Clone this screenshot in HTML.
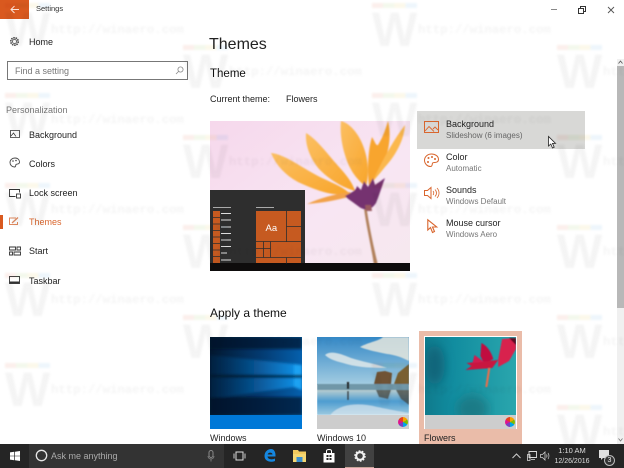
<!DOCTYPE html>
<html><head><meta charset="utf-8"><style>
html,body{margin:0;padding:0}
body{width:624px;height:468px;position:relative;overflow:hidden;background:#fff;font-family:"Liberation Sans",sans-serif;color:#222}
.t{position:absolute;white-space:nowrap;font-size:9px;line-height:12px;color:#222}
.s{color:#767676;font-size:8px}
#wms{position:absolute;left:0;top:0;width:624px;height:468px;overflow:hidden;mix-blend-mode:multiply;pointer-events:none}
.wm{position:absolute;width:180px;height:50px;filter:blur(1px);opacity:.3}
.wm i{position:absolute;left:0;top:0;width:45px;height:5px;background:linear-gradient(90deg,#f3c8be 0 25%,#d8e8c0 25% 50%,#f5e8b8 50% 75%,#c4e0f5 75%)}
.wm b{position:absolute;left:0;top:0;font:bold 48px "Liberation Sans",sans-serif;color:#dcdcdc}
.wm span{position:absolute;left:46px;top:20px;font:bold 12.3px "Liberation Mono",monospace;color:#dcdcdc}
svg{position:absolute;overflow:visible}
.th{position:absolute;width:92px;height:78px;top:337px;overflow:hidden}
</style></head><body>

<!-- title bar -->
<div style="position:absolute;left:0;top:0;width:29px;height:19px;background:#d9591f"></div>
<svg style="left:10px;top:5px" width="10" height="9" viewBox="0 0 10 9"><path d="M4.500 1 1 4.500 4.500 8M1 4.500h8" fill="none" stroke="#fbe3d8" stroke-width="1"/></svg>
<div class="t" style="left:36px;top:3px;font-size:7.500px;color:#333">Settings</div>
<div style="position:absolute;left:551px;top:9px;width:6px;height:1px;background:#888"></div>
<svg style="left:578px;top:6px" width="8" height="8" viewBox="0 0 8 8"><path d="M.5 2.500h5v5h-5zM2.500 2.500V.5h5v5h-2" fill="none" stroke="#333"/></svg>
<svg style="left:607px;top:6px" width="8" height="8" viewBox="0 0 8 8"><path d="M1 1l6 6M7 1 1 7" stroke="#555" stroke-width=".9"/></svg>

<!-- sidebar -->
<svg style="left:9px;top:36px" width="11" height="11" viewBox="0 0 11 11"><circle cx="5.500" cy="5.500" r="3.700" fill="none" stroke="#444" stroke-width="1.600" stroke-dasharray="1.500 .8"/><circle cx="5.500" cy="5.500" r="2" fill="none" stroke="#444" stroke-width=".8"/></svg>
<div class="t" style="left:29px;top:36px;color:#222">Home</div>
<div style="position:absolute;left:7px;top:61px;width:179px;height:17px;border:1px solid #777;background:#fff"></div>
<div class="t" style="left:15px;top:65px;color:#777">Find a setting</div>
<svg style="left:175px;top:66px" width="9" height="9" viewBox="0 0 9 9"><circle cx="5.500" cy="3.500" r="2.600" fill="none" stroke="#888" stroke-width=".8"/><path d="M3.500 5.500 1 8" stroke="#888" stroke-width=".8"/></svg>
<div class="t" style="left:6px;top:104px;color:#777">Personalization</div>

<svg style="left:10px;top:130px" width="10" height="8" viewBox="0 0 10 8"><path d="M.5.500h9v7h-9z" fill="none" stroke="#333" stroke-width=".8"/><path d="M1 6l2.500-3L6 6.500" fill="none" stroke="#333" stroke-width=".7"/></svg>
<div class="t" style="left:29px;top:129px">Background</div>
<svg style="left:9px;top:157px" width="12" height="12" viewBox="0 0 12 12"><path d="M6 1C3 1 1 3 1 5.500S3 10 5.500 10c1.500 0 1-1.500 1.500-2.500s3.500.5 3.500-2.500C10.500 2.500 8.500 1 6 1z" fill="none" stroke="#444" stroke-width=".9"/><circle cx="4" cy="4" r=".8" fill="#444"/><circle cx="7" cy="3.500" r=".8" fill="#444"/></svg>
<div class="t" style="left:29px;top:158px">Colors</div>
<svg style="left:9px;top:189px" width="12" height="10" viewBox="0 0 12 10"><path d="M6.500 7.500H.5v-7h10v3" fill="none" stroke="#333" stroke-width=".9"/><rect x="7.500" y="5" width="4" height="4" fill="none" stroke="#333" stroke-width=".9"/></svg>
<div class="t" style="left:29px;top:187px">Lock screen</div>
<div style="position:absolute;left:0;top:215px;width:3px;height:14px;background:#d9591f"></div>
<svg style="left:9px;top:216px" width="11" height="11" viewBox="0 0 11 11"><path d="M7 2H.5v6.500h8V6" fill="none" stroke="#e08a60" stroke-width="1"/><path d="M3 7l6-5.500" stroke="#e08a60" stroke-width="1.300"/></svg>
<div class="t" style="left:29px;top:216px;color:#d9662e">Themes</div>
<svg style="left:9px;top:246px" width="12" height="10" viewBox="0 0 12 10"><path d="M.5 1h6v3h-6zM8 1h3.500v3H8zM.5 6h3v3h-3zM5 6h6.500v3H5z" fill="none" stroke="#333" stroke-width=".9"/></svg>
<div class="t" style="left:29px;top:245px">Start</div>
<svg style="left:9px;top:276px" width="11" height="8" viewBox="0 0 11 8"><rect x=".5" y=".5" width="10" height="7" fill="none" stroke="#333" stroke-width=".9"/><rect x=".5" y="5.500" width="10" height="2" fill="#333"/></svg>
<div class="t" style="left:29px;top:275px">Taskbar</div>

<!-- main -->
<div class="t" style="left:209px;top:35px;font-size:16px;line-height:20px;color:#222">Themes</div>
<div class="t" style="left:210px;top:67px;font-size:11.500px;line-height:14px;color:#111">Theme</div>
<div class="t" style="left:210px;top:93px;color:#222">Current theme:</div>
<div class="t" style="left:286px;top:93px;color:#222">Flowers</div>

<!-- preview -->
<svg style="left:210px;top:121px;overflow:hidden" width="200" height="150" viewBox="210 121 200 150">
<defs>
<linearGradient id="bg" x1="0" y1="0" x2="1" y2="1"><stop offset="0" stop-color="#f6d8ec"/><stop offset=".6" stop-color="#f8e6f3"/><stop offset="1" stop-color="#f6e8ee"/></linearGradient>
<linearGradient id="pt" x1="0" y1="0" x2="1" y2="1"><stop offset="0" stop-color="#fbbf62"/><stop offset="1" stop-color="#f8a52a"/></linearGradient>
<filter id="b1"><feGaussianBlur stdDeviation=".7"/></filter>
</defs>
<rect x="210" y="121" width="200" height="150" fill="url(#bg)"/>
<g filter="url(#b1)">
<path d="M366 205C369 225 373 245 378 265L374 265C371 245 366 225 364 208Z" fill="#b0805a"/>
<path d="M271 153C285 154 305 170 322 178C335 184 345 188 350 194C335 196 322 193 298 182C285 175 276 165 271 153Z" fill="url(#pt)"/>
<path d="M306 133C318 140 328 155 340 168C348 177 353 184 355 191C345 188 332 182 320 170C311 160 305 146 306 133Z" fill="url(#pt)"/>
<path d="M341 121C352 124 362 138 366 155C369 168 368 178 366 187C358 180 350 172 345 155C341 142 340 130 341 121Z" fill="url(#pt)"/>
<path d="M372 137C375 142 376 146 378 145C383 137 386 128 388 121C391 133 390 148 384 162C380 172 375 180 369 186C367 170 368 150 372 137Z" fill="#f8a52e"/>
<path d="M405 125C404 140 396 155 385 167C381 172 377 177 373 181C380 165 392 142 405 125Z" fill="#fbb84e"/>
<path d="M307 204C320 198 335 194 350 192L352 196C338 200 322 203 307 204Z" fill="#f2a24a"/>
<path d="M345 196C352 192 356 191 357 186L361 190 364 181 368 187 373 178 375 185 385 178C382 186 379 196 376 203 371 211 364 211 358 206 353 202 349 200 345 196Z" fill="#74306f"/>
<path d="M365 205l6 0 1 6h-6z" fill="#9a5a60"/>
</g>
<rect x="210" y="190" width="95" height="73" fill="#2e2e2e"/>
<rect x="210" y="263" width="200" height="8" fill="#0e0c0c"/>
<rect x="213" y="207" width="18" height="1" fill="#aaa"/><rect x="256" y="207" width="18" height="1" fill="#aaa"/>
<rect x="213" y="211" width="7" height="52" fill="#c65a20"/>
<path d="M213 217.500h7M213 224h7M213 230.500h7M213 237h7M213 243.500h7M213 250h7M213 256.500h7" stroke="#2e2e2e" stroke-width=".8"/>
<path d="M221 213.500h10M221 220h10M221 227h10M221 233.500h10M221 240h10M221 246.500h10M221 253h6M221 260h10" stroke="#ddd" stroke-width="1"/>
<rect x="256" y="211" width="45" height="52" fill="#c65a20"/>
<path d="M286.500 211v31M286.500 226.500h14.500M256 241.500h45M256 257.500h45M263.500 241.500v16M270.500 241.500v16M256 248.500h14.500M286.500 257.500v6" stroke="#2e2e2e" stroke-width=".8" fill="none"/>
<text x="265.500" y="231" font-family="Liberation Sans" font-size="9.500" fill="#fff">Aa</text>
</svg>

<!-- right list -->
<div style="position:absolute;left:417px;top:111px;width:168px;height:38px;background:#d8d8d6"></div>
<svg style="left:424px;top:121px" width="15" height="12" viewBox="0 0 15 12"><path d="M.5.500h14v11H.5z" fill="none" stroke="#d9662e"/><path d="M1 10l4-4.500 5 5M9 8l2-2 3 3" fill="none" stroke="#d9662e" stroke-width=".9"/></svg>
<div class="t" style="left:446px;top:118px">Background</div>
<div class="t s" style="left:446px;top:130px;color:#666">Slideshow (6 images)</div>
<svg style="left:424px;top:153px" width="15" height="15" viewBox="0 0 15 15"><path d="M7.500 1C3.500 1 .5 3.800.5 7.300s3 6.200 6 6.200c2 0 1.500-2 2-3.300S14.500 10.500 14.500 6.500C14.500 3 11 1 7.500 1z" fill="none" stroke="#d9662e"/><circle cx="4.500" cy="5" r="1" fill="#d9662e"/><circle cx="8" cy="4" r="1" fill="#d9662e"/><circle cx="11" cy="6" r="1" fill="#d9662e"/><circle cx="4" cy="9" r="1" fill="#d9662e"/></svg>
<div class="t" style="left:446px;top:151px">Color</div>
<div class="t s" style="left:446px;top:163px;color:#777">Automatic</div>
<svg style="left:424px;top:186px" width="15" height="14" viewBox="0 0 15 14"><path d="M.5 4.500h3L7 1.500v11l-3.500-3h-3z" fill="none" stroke="#d9662e"/><path d="M9 5c1 1 1 3 0 4M11 3.500c2 2 2 5 0 7M13 2c2.700 3 2.700 7 0 10" fill="none" stroke="#d9662e" stroke-width=".8"/></svg>
<div class="t" style="left:446px;top:184px">Sounds</div>
<div class="t s" style="left:446px;top:196px;color:#777">Windows Default</div>
<svg style="left:427px;top:219px" width="11" height="15" viewBox="0 0 11 15"><path d="M.8.800V11l2.700-2.400L5.500 13.500l2-1-2-4.500h4.200z" fill="none" stroke="#d9662e" stroke-width="1.100"/></svg>
<div class="t" style="left:446px;top:217px">Mouse cursor</div>
<div class="t s" style="left:446px;top:229px;color:#777">Windows Aero</div>
<svg style="left:548px;top:136px" width="9" height="13" viewBox="0 0 9 13"><path d="M.5.500v9.500l2.300-2 1.700 4 1.700-.8-1.700-3.800h3z" fill="#fff" stroke="#222" stroke-width=".8"/></svg>

<!-- scrollbar -->
<div style="position:absolute;left:617px;top:59px;width:7px;height:385px;background:#f0f0f0"></div>
<div style="position:absolute;left:617px;top:66px;width:7px;height:242px;background:#b8b8b8"></div>
<svg style="left:618px;top:60px" width="5" height="4" viewBox="0 0 5 4"><path d="M.5 3.500 2.500 1l2 2.500" fill="none" stroke="#555" stroke-width=".8"/></svg>
<svg style="left:618px;top:438px" width="5" height="4" viewBox="0 0 5 4"><path d="M.5.500 2.500 3l2-2.500" fill="none" stroke="#777" stroke-width=".8"/></svg>

<div class="t" style="left:210px;top:306px;font-size:12px;line-height:14px;color:#111">Apply a theme</div>

<!-- thumbnails -->
<svg class="th" style="left:210px" viewBox="0 0 92 78" preserveAspectRatio="none">
<defs>
<linearGradient id="w1" x1="0" y1="0" x2="1" y2="0"><stop offset="0" stop-color="#021830"/><stop offset=".55" stop-color="#033a70"/><stop offset="1" stop-color="#0560ad"/></linearGradient>
<linearGradient id="w2" x1="0" y1="0" x2="1" y2="0"><stop offset="0" stop-color="#04305e" stop-opacity=".3"/><stop offset="1" stop-color="#0f8be0"/></linearGradient>
<filter id="b2"><feGaussianBlur stdDeviation="1.300"/></filter>
<filter id="b3"><feGaussianBlur stdDeviation=".5"/></filter>
</defs>
<rect width="92" height="78" fill="url(#w1)"/>
<g filter="url(#b2)">
<path d="M0 18 84 27V38L0 37ZM0 41H84V50L0 62Z" fill="url(#w2)"/>
<path d="M84 27 92 28V39H84ZM84 41H92V53L84 50Z" fill="#1ea2f2"/>
<rect y="38" width="92" height="2.500" fill="#011a33"/>
<rect y="0" width="92" height="12" fill="#021428" opacity=".7"/>
<rect y="60" width="92" height="18" fill="#021428" opacity=".7"/>
</g>
</svg>
<div style="position:absolute;left:210px;top:415px;width:92px;height:14px;background:#0078d7"></div>
<div class="t" style="left:210px;top:432px">Windows</div>

<svg class="th" style="left:317px" viewBox="0 0 92 78" preserveAspectRatio="none">
<defs><linearGradient id="sk" x1="0" y1="0" x2="0" y2="1"><stop offset="0" stop-color="#3488c6"/><stop offset="1" stop-color="#a4cde2"/></linearGradient><linearGradient id="wt" x1="0" y1="0" x2="0" y2="1"><stop offset="0" stop-color="#b8cdd0"/><stop offset=".45" stop-color="#4d9cd0"/><stop offset="1" stop-color="#9cc9e0"/></linearGradient></defs>
<rect width="92" height="48" fill="url(#sk)"/>
<g filter="url(#b3)">
<path d="M43 10C52 5 62 4 66 0H92V24C84 20 78 18 70 17 60 15 50 13 43 10Z" fill="#e6e8de" opacity=".85"/>
<path d="M8 18C14 13 24 17 34 21 46 25 60 27 70 31 52 31 38 30 26 26 18 24 12 22 8 18Z" fill="#dfe9ea" opacity=".85"/>
<rect y="47" width="92" height="6" fill="#6f97a8"/>
<rect y="53" width="92" height="25" fill="url(#wt)"/>
<path d="M57 47 60 35 68 34 75 36 74 47Z" fill="#6f5236"/>
<path d="M77 47 81 36 92 27V47Z" fill="#7a6030"/>
<path d="M59 53H74L71 62 62 60ZM79 53H92V68L84 62Z" fill="#4a4a42" opacity=".75"/>
<path d="M31 45V52" stroke="#222" stroke-width="2.200"/><path d="M31 54V63" stroke="#333" stroke-width="1.500"/>
<path d="M14 77C24 66 44 66 60 70 70 72 80 74 92 76V78H14Z" fill="#d8e6ee" opacity=".7"/>
</g>
</svg>
<div style="position:absolute;left:317px;top:415px;width:92px;height:14px;background:#cdcdcd"></div>
<div style="position:absolute;left:398px;top:417px;width:10px;height:10px;border-radius:50%;background:conic-gradient(#f6a200 0 17%,#7fba00 17% 33%,#00a4e8 33% 50%,#7a3fc0 50% 67%,#e0148c 67% 83%,#e8401c 83%)"></div>
<div class="t" style="left:317px;top:432px">Windows 10</div>

<div style="position:absolute;left:419px;top:331px;width:103px;height:113px;background:#eabca9"></div>
<div style="position:absolute;left:424px;top:336px;width:91px;height:91px;border:1px solid #fff"></div>
<svg class="th" style="left:425px;width:91px" viewBox="0 0 92 78" preserveAspectRatio="none">
<defs>
<linearGradient id="fl" x1="0" y1="0" x2="1" y2="0"><stop offset="0" stop-color="#0f7a8c"/><stop offset=".3" stop-color="#118c9f"/><stop offset="1" stop-color="#2aa6ad"/></linearGradient>
<filter id="b4"><feGaussianBlur stdDeviation="5"/></filter>
</defs>
<rect width="92" height="78" fill="url(#fl)"/>
<g filter="url(#b4)"><ellipse cx="10" cy="28" rx="10" ry="20" fill="#0b5a70" opacity=".7"/><ellipse cx="48" cy="72" rx="16" ry="14" fill="#17707a" opacity=".7"/></g>
<g filter="url(#b3)">
<path d="M57 6C63 9 67 15 69 22L60 27 56 19Z" fill="#c01040"/>
<path d="M74 22 78 2 92 1V12L85 24 74 30Z" fill="#d8244e"/>
<path d="M42 26 74 23 68 31 41 33 47 29Z" fill="#c8123f"/>
<path d="M50 18 60 25 48 26Z" fill="#d01a50"/>
<path d="M85 1H92V8Z" fill="#5c0d20"/>
<path d="M65 31 62 50" stroke="#e0704f" stroke-width="2.200"/>
</g>
</svg>
<div style="position:absolute;left:425px;top:415px;width:91px;height:14px;background:#cdcdcd"></div>
<div style="position:absolute;left:505px;top:417px;width:10px;height:10px;border-radius:50%;background:conic-gradient(#f6a200 0 17%,#7fba00 17% 33%,#00a4e8 33% 50%,#7a3fc0 50% 67%,#e0148c 67% 83%,#e8401c 83%)"></div>
<div class="t" style="left:424px;top:432px">Flowers</div>

<!-- taskbar -->
<div style="position:absolute;left:0;top:444px;width:624px;height:24px;background:#252525"></div>
<div style="position:absolute;left:29px;top:444px;width:195px;height:24px;background:#333"></div>
<div style="position:absolute;left:345px;top:444px;width:29px;height:24px;background:#414141"></div>
<div style="position:absolute;left:345px;top:467px;width:29px;height:1px;background:#c9a59a"></div>
<svg style="left:10px;top:451px" width="10" height="10" viewBox="0 0 10 10"><path d="M0 1.400 4.300.8v3.900H0zM5 .7 10 0v4.700H5zM0 5.300h4.300v3.900L0 8.600zM5 5.300h5V10L5 9.300z" fill="#fff"/></svg>
<svg style="left:35px;top:449px" width="13" height="13" viewBox="0 0 13 13"><circle cx="6.500" cy="6.500" r="5.200" fill="none" stroke="#e6e6e6" stroke-width="1.300"/></svg>
<div class="t" style="left:51px;top:450px;color:#aaa">Ask me anything</div>
<svg style="left:207px;top:450px" width="8" height="12" viewBox="0 0 8 12"><rect x="2" y=".5" width="4" height="7" rx="2" fill="none" stroke="#888"/><path d="M1 6c0 4 6 4 6 0M4 9v2.500" fill="none" stroke="#888" stroke-width=".8"/></svg>
<svg style="left:233px;top:451px" width="13" height="10" viewBox="0 0 13 10"><path d="M3 1h7v8H3z" fill="none" stroke="#ddd"/><path d="M1 2.500v5M12 2.500v5" stroke="#ddd" stroke-width=".9"/></svg>
<svg style="left:264px;top:449px" width="12" height="13" viewBox="0 0 12 13"><path d="M11.500 7.500H3.500C3.800 10.500 8 11 11 9.500V12C6 14 .5 12 .5 7 .5 2.500 4 0 7 0c3 0 4.800 3 4.500 7.500zM8.500 5.500C8.500 3 4 3 3.700 5.500z" fill="#1587e0" fill-rule="evenodd"/></svg>
<svg style="left:293px;top:450px" width="13" height="12" viewBox="0 0 13 12"><path d="M0 0h5l1 1.500h7V12H0z" fill="#f2ca5e"/><path d="M0 4h13v8H0z" fill="#f5d873"/><rect x="3.500" y="7" width="6" height="5" fill="#3a8fd0"/></svg>
<svg style="left:323px;top:449px" width="12" height="14" viewBox="0 0 12 14"><path d="M3.500 4V2c0-2 5-2 5 0v2" fill="none" stroke="#fff"/><path d="M.5 4h11v9.500H.5z" fill="#fff"/><path d="M3.500 6h2v2h-2zM6.500 6h2v2h-2zM3.500 9h2v2h-2zM6.500 9h2v2h-2z" fill="#252525"/></svg>
<svg style="left:354px;top:450px" width="12" height="12" viewBox="0 0 12 12"><circle cx="6" cy="6" r="3.800" fill="none" stroke="#f2f2f2" stroke-width="2.100"/><circle cx="6" cy="6" r="5" fill="none" stroke="#f2f2f2" stroke-width="1.500" stroke-dasharray="1.700 1.450"/></svg>
<svg style="left:512px;top:453px" width="9" height="6" viewBox="0 0 9 6"><path d="M.5 5 4.500 1l4 4" fill="none" stroke="#ccc"/></svg>
<svg style="left:527px;top:451px" width="10" height="10" viewBox="0 0 10 10"><path d="M2 .5h7.500v6H2z" fill="none" stroke="#ddd" stroke-width=".9"/><path d="M.5 3.500h2.500v6H.5zM4 8.500h4" fill="none" stroke="#ddd" stroke-width=".8"/></svg>
<svg style="left:540px;top:451px" width="11" height="10" viewBox="0 0 11 10"><path d="M.5 3.500h2L5 1v8L2.500 6.500h-2z" fill="none" stroke="#ccc" stroke-width=".8"/><path d="M6.500 3.500c.7 1 .7 2 0 3M8 2c1.300 2 1.300 4 0 6" fill="none" stroke="#ccc" stroke-width=".7"/></svg>
<div class="t" style="left:550px;top:445px;width:44px;text-align:center;font-size:7.500px;line-height:11px;color:#ddd">1:10 AM</div>
<div class="t" style="left:550px;top:456px;width:44px;text-align:center;font-size:7px;line-height:11px;color:#ddd">12/26/2016</div>
<svg style="left:599px;top:450px" width="14" height="13" viewBox="0 0 14 13"><path d="M0 0h10v8H4L2 10V8H0z" fill="#e0e0e0"/></svg>
<div style="position:absolute;left:604px;top:455px;width:9px;height:9px;border:1px solid #bbb;border-radius:50%;background:#333;color:#eee;font-size:7px;line-height:9px;text-align:center">3</div>

<div id="wms">
<div class="wm" style="left:5px;top:3px"><i></i><b>W</b><span>http://winaero.com</span></div>
<div class="wm" style="left:5px;top:93px"><i></i><b>W</b><span>http://winaero.com</span></div>
<div class="wm" style="left:5px;top:183px"><i></i><b>W</b><span>http://winaero.com</span></div>
<div class="wm" style="left:5px;top:273px"><i></i><b>W</b><span>http://winaero.com</span></div>
<div class="wm" style="left:5px;top:363px"><i></i><b>W</b><span>http://winaero.com</span></div>
<div class="wm" style="left:183px;top:45px"><i></i><b>W</b><span>http://winaero.com</span></div>
<div class="wm" style="left:183px;top:135px"><i></i><b>W</b><span>http://winaero.com</span></div>
<div class="wm" style="left:183px;top:225px"><i></i><b>W</b><span>http://winaero.com</span></div>
<div class="wm" style="left:183px;top:315px"><i></i><b>W</b><span>http://winaero.com</span></div>
<div class="wm" style="left:372px;top:3px"><i></i><b>W</b><span>http://winaero.com</span></div>
<div class="wm" style="left:372px;top:93px"><i></i><b>W</b><span>http://winaero.com</span></div>
<div class="wm" style="left:372px;top:183px"><i></i><b>W</b><span>http://winaero.com</span></div>
<div class="wm" style="left:372px;top:273px"><i></i><b>W</b><span>http://winaero.com</span></div>
<div class="wm" style="left:372px;top:363px"><i></i><b>W</b><span>http://winaero.com</span></div>
<div class="wm" style="left:557px;top:45px"><i></i><b>W</b><span>http://winaero.com</span></div>
<div class="wm" style="left:557px;top:135px"><i></i><b>W</b><span>http://winaero.com</span></div>
<div class="wm" style="left:557px;top:225px"><i></i><b>W</b><span>http://winaero.com</span></div>
<div class="wm" style="left:557px;top:315px"><i></i><b>W</b><span>http://winaero.com</span></div>
<div class="wm" style="left:557px;top:405px"><i></i><b>W</b><span>http://winaero.com</span></div>
</div>
</body></html>
